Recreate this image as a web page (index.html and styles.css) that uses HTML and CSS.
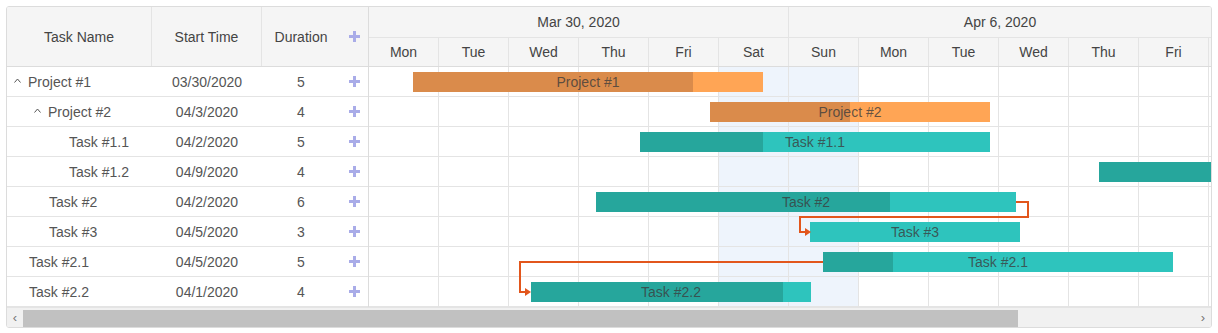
FILE: index.html
```html
<!DOCTYPE html>
<html lang="en">
<head>
  <meta charset="UTF-8">
  <meta name="viewport" content="width=device-width, initial-scale=1.0">
  <title>Gantt</title>
  <link rel="stylesheet" href="styles.css">
</head>
<body>
  <div class="gantt">
    <div class="main">
      <!-- left grid -->
      <div class="grid">
        <div class="grid-head">
          <div class="col-name">Task Name</div>
          <div class="col-start">Start Time</div>
          <div class="col-dur">Duration</div>
          <div class="col-add"><span class="plus"></span></div>
        </div>

        <div class="grid-row">
          <div class="col-name"><span class="caret"><svg width="7" height="5" viewBox="0 0 7 5"><polyline points="0.5,4.5 3.5,1 6.5,4.5" fill="none" stroke="#555" stroke-width="1"/></svg></span>Project #1</div>
          <div class="col-start">03/30/2020</div>
          <div class="col-dur">5</div>
          <div class="col-add"><span class="plus"></span></div>
        </div>
        <div class="grid-row">
          <div class="col-name lvl-1"><span class="caret"><svg width="7" height="5" viewBox="0 0 7 5"><polyline points="0.5,4.5 3.5,1 6.5,4.5" fill="none" stroke="#555" stroke-width="1"/></svg></span>Project #2</div>
          <div class="col-start">04/3/2020</div>
          <div class="col-dur">4</div>
          <div class="col-add"><span class="plus"></span></div>
        </div>
        <div class="grid-row">
          <div class="col-name lvl-2 leaf"><span class="caret"></span>Task #1.1</div>
          <div class="col-start">04/2/2020</div>
          <div class="col-dur">5</div>
          <div class="col-add"><span class="plus"></span></div>
        </div>
        <div class="grid-row">
          <div class="col-name lvl-2 leaf"><span class="caret"></span>Task #1.2</div>
          <div class="col-start">04/9/2020</div>
          <div class="col-dur">4</div>
          <div class="col-add"><span class="plus"></span></div>
        </div>
        <div class="grid-row">
          <div class="col-name lvl-1 leaf"><span class="caret"></span>Task #2</div>
          <div class="col-start">04/2/2020</div>
          <div class="col-dur">6</div>
          <div class="col-add"><span class="plus"></span></div>
        </div>
        <div class="grid-row">
          <div class="col-name lvl-1 leaf"><span class="caret"></span>Task #3</div>
          <div class="col-start">04/5/2020</div>
          <div class="col-dur">3</div>
          <div class="col-add"><span class="plus"></span></div>
        </div>
        <div class="grid-row">
          <div class="col-name leaf"><span class="caret"></span>Task #2.1</div>
          <div class="col-start">04/5/2020</div>
          <div class="col-dur">5</div>
          <div class="col-add"><span class="plus"></span></div>
        </div>
        <div class="grid-row">
          <div class="col-name leaf"><span class="caret"></span>Task #2.2</div>
          <div class="col-start">04/1/2020</div>
          <div class="col-dur">4</div>
          <div class="col-add"><span class="plus"></span></div>
        </div>
      </div>

      <!-- timeline -->
      <div class="chart">
        <div class="scale">
          <div class="scale-weeks">
            <div class="week week-first">Mar 30, 2020</div>
            <div class="week">Apr 6, 2020</div>
          </div>
          <div class="scale-days">
            <div class="day">Mon</div>
            <div class="day">Tue</div>
            <div class="day">Wed</div>
            <div class="day">Thu</div>
            <div class="day">Fri</div>
            <div class="day">Sat</div>
            <div class="day">Sun</div>
            <div class="day">Mon</div>
            <div class="day">Tue</div>
            <div class="day">Wed</div>
            <div class="day">Thu</div>
            <div class="day">Fri</div>
            <div class="day"></div>
          </div>
        </div>

        <div class="chart-body">
          <div class="columns">
            <div class="day-col"></div>
            <div class="day-col"></div>
            <div class="day-col"></div>
            <div class="day-col"></div>
            <div class="day-col"></div>
            <div class="day-col weekend"></div>
            <div class="day-col weekend"></div>
            <div class="day-col"></div>
            <div class="day-col"></div>
            <div class="day-col"></div>
            <div class="day-col"></div>
            <div class="day-col"></div>
            <div class="day-col"></div>
          </div>

          <div class="bars">
            <div class="bar-row">
              <div class="bar project" style="left:44px;width:350px">
                <div class="bar-progress" style="width:280px"></div>
                <span class="bar-label">Project #1</span>
              </div>
            </div>
            <div class="bar-row">
              <div class="bar project" style="left:341px;width:280px">
                <div class="bar-progress" style="width:140px"></div>
                <span class="bar-label">Project #2</span>
              </div>
            </div>
            <div class="bar-row">
              <div class="bar" style="left:271px;width:350px">
                <div class="bar-progress" style="width:123px"></div>
                <span class="bar-label">Task #1.1</span>
              </div>
            </div>
            <div class="bar-row">
              <div class="bar" style="left:730px;width:280px">
                <div class="bar-progress" style="width:230px"></div>
              </div>
            </div>
            <div class="bar-row">
              <div class="bar" style="left:227px;width:420px">
                <div class="bar-progress" style="width:294px"></div>
                <span class="bar-label">Task #2</span>
              </div>
            </div>
            <div class="bar-row">
              <div class="bar" style="left:441px;width:210px">
                <span class="bar-label">Task #3</span>
              </div>
            </div>
            <div class="bar-row">
              <div class="bar" style="left:454px;width:350px">
                <div class="bar-progress" style="width:70px"></div>
                <span class="bar-label">Task #2.1</span>
              </div>
            </div>
            <div class="bar-row">
              <div class="bar" style="left:162px;width:280px">
                <div class="bar-progress" style="width:252px"></div>
                <span class="bar-label">Task #2.2</span>
              </div>
            </div>
          </div>

          <svg class="links" width="842" height="240" viewBox="0 0 842 240">
            <polyline points="647,135 659,135 659,150 431,150 431,165 437,165" fill="none" stroke="#e2561c" stroke-width="2"/>
            <polygon points="436,161 442,165 436,169" fill="#e2561c"/>
            <polyline points="454,195 151,195 151,225 157,225" fill="none" stroke="#e2561c" stroke-width="2"/>
            <polygon points="156,221 162,225 156,229" fill="#e2561c"/>
          </svg>
        </div>
      </div>
    </div>

    <div class="hscroll">
      <div class="scroll-btn">&#8249;</div>
      <div class="scroll-track"><div class="scroll-thumb"></div></div>
      <div class="scroll-btn">&#8250;</div>
    </div>
  </div>
</body>
</html>
```

FILE: styles.css
```css
* {
  box-sizing: border-box;
}
body {
  margin: 6px;
  font-family: 'Liberation Sans', Arial, sans-serif;
  font-size: 14px;
  color: #555;
  background: #fff;
}
.gantt {
  width: 1206px;
  border: 1px solid #dcdcdc;
  border-radius: 3px;
  overflow: hidden;
}
.main {
  display: flex;
}

/* grid */
.grid {
  width: 362px;
  flex: none;
  border-right: 1px solid #dcdcdc;
}
.grid-head {
  display: flex;
  height: 60px;
  background: #f5f5f5;
  border-bottom: 1px solid #dcdcdc;
  color: #444;
}
.grid-head > div {
  display: flex;
  align-items: center;
  justify-content: center;
}
.grid-head .col-name,
.grid-head .col-start {
  border-right: 1px solid #e4e4e4;
}
.grid-head .col-name {
  padding-left: 0;
}
.grid-row {
  display: flex;
  height: 30px;
  border-bottom: 1px solid #e4e4e4;
  align-items: center;
}
.col-name {
  width: 145px;
  padding-left: 7px;
  display: flex;
  align-items: center;
  white-space: nowrap;
}
.col-start {
  width: 110px;
  text-align: center;
}
.col-dur {
  width: 78px;
  text-align: center;
}
.col-add {
  width: 28px;
  display: flex;
  justify-content: center;
  align-items: center;
}
.lvl-1 {
  padding-left: 27px;
}
.lvl-2 {
  padding-left: 47px;
}
.leaf .caret {
  width: 15px;
}
.caret {
  width: 14px;
  height: 14px;
  flex: none;
  display: flex;
  align-items: center;
  padding-bottom: 3px;
}
.plus {
  position: relative;
  width: 11px;
  height: 11px;
  display: inline-block;
}
.plus::before,
.plus::after {
  content: "";
  position: absolute;
  background: #a9ace8;
}
.plus::before {
  left: 4px;
  top: 0;
  width: 3px;
  height: 11px;
}
.plus::after {
  left: 0;
  top: 4px;
  width: 11px;
  height: 3px;
}

/* timeline */
.chart {
  width: 842px;
  overflow: hidden;
}
.scale {
  background: #f5f5f5;
  color: #444;
  border-bottom: 1px solid #dcdcdc;
}
.scale-weeks {
  display: flex;
  height: 31px;
  border-bottom: 1px solid #e4e4e4;
}
.week {
  flex: 1;
  display: flex;
  align-items: center;
  justify-content: center;
}
.week-first {
  flex: none;
  width: 420px;
  border-right: 1px solid #e4e4e4;
}
.scale-days {
  display: flex;
  height: 28px;
}
.day {
  width: 70px;
  flex: none;
  border-right: 1px solid #e4e4e4;
  display: flex;
  align-items: center;
  justify-content: center;
}
.chart-body {
  position: relative;
  height: 240px;
}
.columns {
  display: flex;
  height: 240px;
}
.day-col {
  width: 70px;
  flex: none;
  border-right: 1px solid #e4e4e4;
}
.day-col.weekend {
  background: #eef4fc;
}
.bars {
  position: absolute;
  inset: 0;
}
.bar-row {
  position: relative;
  height: 30px;
  border-bottom: 1px solid #e4e4e4;
}
.bar {
  position: absolute;
  top: 5px;
  height: 20px;
  background: #2ec4bd;
  overflow: hidden;
  text-align: center;
  line-height: 20px;
  white-space: nowrap;
}
.bar-progress {
  position: absolute;
  left: 0;
  top: 0;
  bottom: 0;
  background: #26a69c;
}
.bar.project {
  background: #ffa555;
}
.bar.project .bar-progress {
  background: #da8b4b;
}
.bar-label {
  position: relative;
  color: rgba(60, 60, 60, 0.8);
}
.links {
  position: absolute;
  left: 0;
  top: 0;
  overflow: visible;
}

/* scrollbar */
.hscroll {
  display: flex;
  height: 20px;
  border-top: 1px solid #e4e4e4;
  background: #f1f1f1;
  padding-top: 2px;
}
.scroll-btn {
  width: 16px;
  flex: none;
  color: #777;
  font-size: 13px;
  line-height: 16px;
  text-align: center;
}
.scroll-track {
  flex: 1;
}
.scroll-thumb {
  width: 995px;
  height: 17px;
  background: #c1c1c1;
}
```
